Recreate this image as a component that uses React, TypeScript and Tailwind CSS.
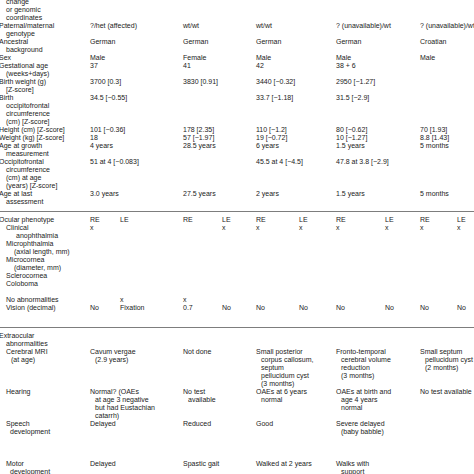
type Row = {
  label: string[];
  first?: string;
  rest?: string;
  vals: string[][];
  h?: string;
};

type SubRow = {
  label: string[];
  first?: string;
  rest?: string;
  vals: string[];
  h?: string;
};

const LINE = "h-[8px] leading-[8px] whitespace-nowrap";
const COLS =
  "grid grid-cols-[91px_30px_63px_39px_34px_43px_37px_49px_35px_37px_80px] items-start";

const top: Row[] = [
  { label: ["change", "or genomic", "coordinates"], first: "pl-[7px]", vals: [[], [], [], [], []] },
  {
    label: ["Paternal/maternal", "genotype"],
    vals: [["?/het (affected)"], ["wt/wt"], ["wt/wt"], ["? (unavailable)/wt"], ["? (unavailable)/wt"]],
  },
  { label: ["Ancestral", "background"], vals: [["German"], ["German"], ["German"], ["German"], ["Croatian"]] },
  { label: ["Sex"], vals: [["Male"], ["Female"], ["Male"], ["Male"], ["Male"]] },
  { label: ["Gestational age", "(weeks+days)"], vals: [["37"], ["41"], ["42"], ["38 + 6"], []] },
  {
    label: ["Birth weight (g)", "[Z-score]"],
    vals: [["3700 [0.3]"], ["3830 [0.91]"], ["3440 [−0.32]"], ["2950 [−1.27]"], []],
  },
  {
    label: ["Birth", "occipitofrontal", "circumference", "(cm) [Z-score]"],
    vals: [["34.5 [−0.55]"], [], ["33.7 [−1.18]"], ["31.5 [−2.9]"], []],
  },
  {
    label: ["Height (cm) [Z-score]"],
    vals: [["101 [−0.36]"], ["178 [2.35]"], ["110 [−1.2]"], ["80 [−0.62]"], ["70 [1.93]"]],
  },
  {
    label: ["Weight (kg) [Z-score]"],
    vals: [["18"], ["57 [−1.97]"], ["19 [−0.72]"], ["10 [−1.27]"], ["8.8 [1.43]"]],
  },
  {
    label: ["Age at growth", "measurement"],
    vals: [["4 years"], ["28.5 years"], ["6 years"], ["1.5 years"], ["5 months"]],
  },
  {
    label: ["Occipitofrontal", "circumference", "(cm) at age", "(years) [Z-score]"],
    vals: [["51 at 4 [−0.083]"], [], ["45.5 at 4 [−4.5]"], ["47.8 at 3.8 [−2.9]"], []],
  },
  {
    label: ["Age at last", "assessment"],
    vals: [["3.0 years"], ["27.5 years"], ["2 years"], ["1.5 years"], ["5 months"]],
  },
];

const ocular: SubRow[] = [
  { label: ["Ocular phenotype"], vals: ["RE", "LE", "RE", "LE", "RE", "LE", "RE", "LE", "RE", "LE"] },
  {
    label: ["Clinical", "anophthalmia"],
    first: "pl-[7px]",
    rest: "pl-[17px]",
    vals: ["x", "", "", "x", "x", "x", "x", "x", "x", "x"],
  },
  { label: ["Microphthalmia", "(axial length, mm)"], first: "pl-[7px]", rest: "pl-[15px]", vals: [] },
  { label: ["Microcornea", "(diameter, mm)"], first: "pl-[7px]", rest: "pl-[15px]", vals: [] },
  { label: ["Sclerocornea"], first: "pl-[7px]", vals: [] },
  { label: ["Coloboma"], first: "pl-[7px]", vals: [], h: "min-h-[16px]" },
  { label: ["No abnormalities"], first: "pl-[7px]", vals: ["", "x", "x", "", "", "", "", "", "", ""] },
  {
    label: ["Vision (decimal)"],
    first: "pl-[7px]",
    vals: ["No", "Fixation", "0.7", "No", "No", "No", "No", "No", "No", "No"],
  },
];

const extra: Row[] = [
  { label: ["Extraocular", "abnormalities"], vals: [[], [], [], [], []] },
  {
    label: ["Cerebral MRI", "(at age)"],
    first: "pl-[7px]",
    rest: "pl-[12px]",
    vals: [
      ["Cavum vergae", "(2.9 years)"],
      ["Not done"],
      ["Small posterior", "corpus callosum,", "septum", "pellucidum cyst", "(3 months)"],
      ["Fronto-temporal", "cerebral volume", "reduction", "(3 months)"],
      ["Small septum", "pellucidum cyst", "(2 months)"],
    ],
  },
  {
    label: ["Hearing"],
    first: "pl-[7px]",
    vals: [
      ["Normal? (OAEs", "at age 3 negative", "but had Eustachian", "catarrh)"],
      ["No test", "available"],
      ["OAEs at 6 years", "normal"],
      ["OAEs at birth and", "age 4 years", "normal"],
      ["No test available"],
    ],
  },
  {
    label: ["Speech", "development"],
    first: "pl-[7px]",
    rest: "pl-[11px]",
    h: "min-h-[40px]",
    vals: [["Delayed"], ["Reduced"], ["Good"], ["Severe delayed", "(baby babble)"], []],
  },
  {
    label: ["Motor", "development"],
    first: "pl-[7px]",
    rest: "pl-[11px]",
    vals: [["Delayed"], ["Spastic gait"], ["Walked at 2 years"], ["Walks with", "support"], []],
  },
];

function Label({ label, first, rest, h }: { label: string[]; first?: string; rest?: string; h?: string }) {
  return (
    <div className={h ?? ""}>
      {label.map((t, i) => (
        <div key={i} className={`${LINE} ${i === 0 ? first ?? "" : rest ?? "pl-[7px]"}`}>
          {t}
        </div>
      ))}
    </div>
  );
}

function Value({ lines, wide = true }: { lines: string[]; wide?: boolean }) {
  return (
    <div className={wide ? "col-span-2" : ""}>
      {lines.map((t, i) => (
        <div key={i} className={`${LINE} ${i ? "pl-[5px]" : ""}`}>
          {t}
        </div>
      ))}
    </div>
  );
}

function Section({ rows }: { rows: Row[] }) {
  return (
    <div className={COLS}>
      {rows.map((r, i) => (
        <div key={i} className="contents">
          <Label label={r.label} first={r.first} rest={r.rest} h={r.h} />
          {r.vals.map((v, j) => (
            <Value key={j} lines={v} />
          ))}
          {r.vals.length === 0 && <div className="col-span-10" />}
        </div>
      ))}
    </div>
  );
}

export default function App() {
  return (
    <div className="h-[474px] w-[474px] overflow-hidden bg-white text-[7px] text-[#222] font-['Liberation_Sans',Arial,sans-serif]">
      <div className="mt-[-2px] ml-[-1px] w-[560px]">
        <Section rows={top} />

        <div className="mt-[5px] h-px bg-[#7d7d7d]" />

        <div className={`${COLS} pt-[4px]`}>
          {ocular.map((r, i) => (
            <div key={i} className="contents">
              <Label label={r.label} first={r.first} rest={r.rest} h={r.h} />
              {r.vals.length ? (
                r.vals.map((v, j) => <Value key={j} lines={v ? [v] : []} wide={false} />)
              ) : (
                <div className="col-span-10" />
              )}
            </div>
          ))}
        </div>

        <div className="mt-[15px] h-px bg-[#7d7d7d]" />

        <div className="pt-[4px]">
          <Section rows={extra} />
        </div>
      </div>
    </div>
  );
}
